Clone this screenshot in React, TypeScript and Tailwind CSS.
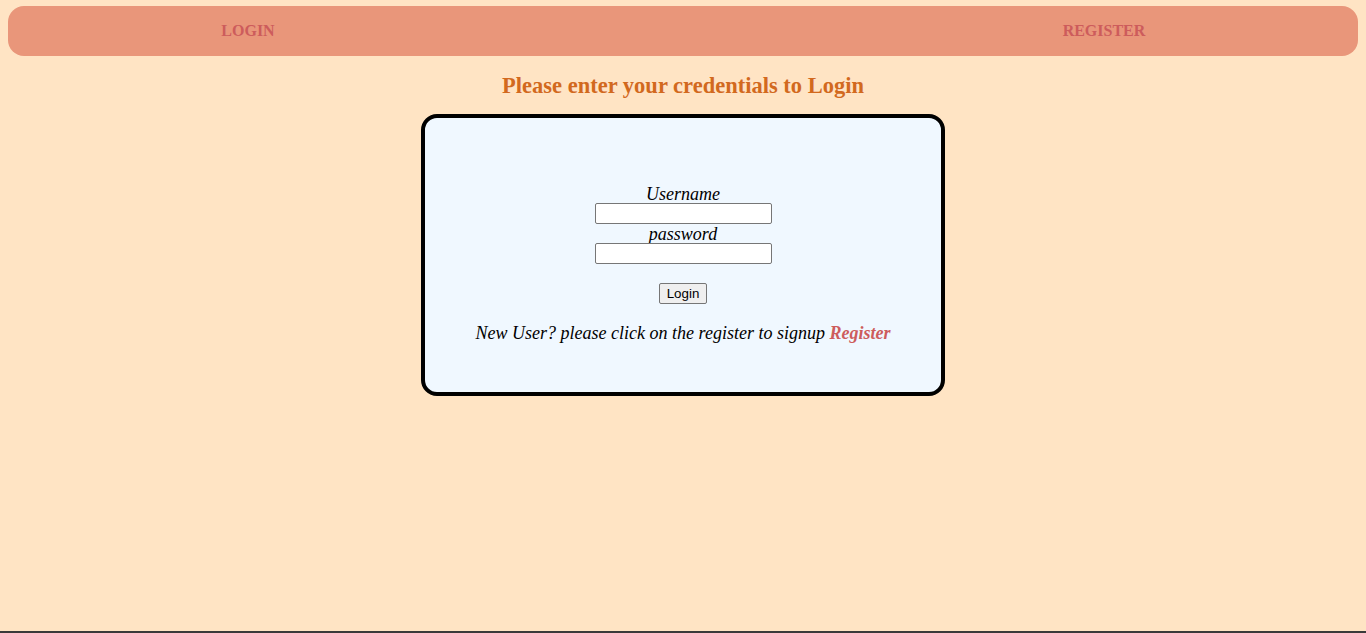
import React, { useState } from 'react';

const App: React.FC = () => {
  const [username, setUsername] = useState('');
  const [password, setPassword] = useState('');

  return (
    <div className="min-h-[633px] flex flex-col bg-[#ffe4c4] font-['Liberation_Serif',serif]">
      <div className="flex-1 pt-[6px] px-[8px]">
        {/* Top nav */}
        <nav className="h-[50px] rounded-[16px] bg-[#e9967a] grid grid-cols-[480px_376px_480px] items-center">
          <a href="#" className="text-center text-[16px] font-bold text-[#cd5c5c]">LOGIN</a>
          <span />
          <a href="#" className="text-center text-[16px] font-bold text-[#cd5c5c]">REGISTER</a>
        </nav>

        <h3 className="mt-[18px] text-center text-[22.5px] leading-[24px] font-bold text-[#d2691e]">
          Please enter your credentials to Login
        </h3>

        {/* Login card */}
        <div className="mx-auto mt-[16px] w-[524px] h-[282px] border-4 border-black rounded-[16px] bg-[#f0f8ff] flex flex-col items-center pt-[66px]">
          <label className="pt-[1px] italic text-[18px] leading-[18px] text-black">Username</label>
          <input
            type="text"
            value={username}
            onChange={(e) => setUsername(e.target.value)}
            className="w-[177px] h-[21px] bg-white border border-[#767676] rounded-[2px] px-[2px] text-[13px]"
          />
          <label className="pt-[1px] italic text-[18px] leading-[18px] text-black">password</label>
          <input
            type="password"
            value={password}
            onChange={(e) => setPassword(e.target.value)}
            className="w-[177px] h-[21px] bg-white border border-[#767676] rounded-[2px] px-[2px] text-[13px]"
          />
          <button className="mt-[19px] w-[48px] h-[21px] bg-[#efefef] border border-[#767676] rounded-[2px] text-[13.33px] leading-[19px] font-['Liberation_Sans',sans-serif] text-black">
            Login
          </button>
          <p className="mt-[20px] italic text-[18px] leading-[18px] text-black">
            New User? please click on the register to signup{' '}
            <a href="#" className="font-bold text-[#cd5c5c]">Register</a>
          </p>
        </div>
      </div>
      <div className="h-[2px] bg-[#3a3a3a]" />
    </div>
  );
};

export default App;
